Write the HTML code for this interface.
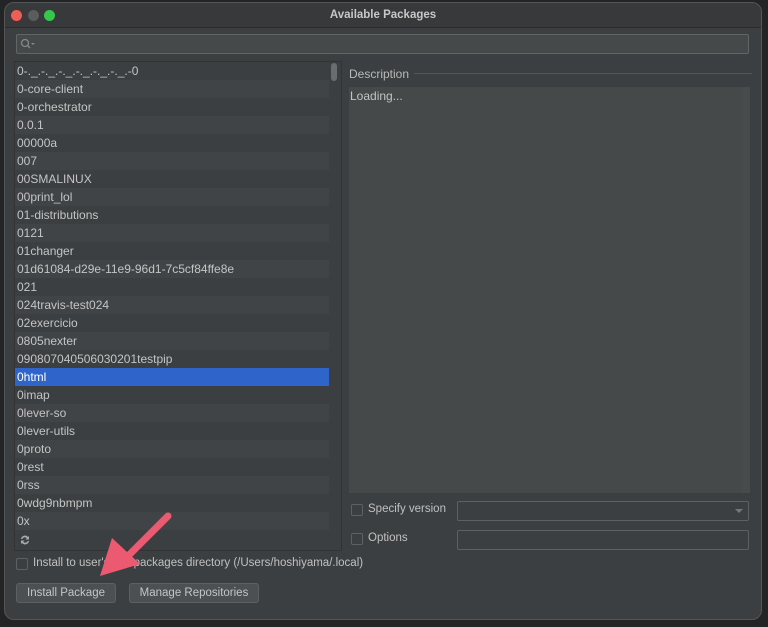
<!DOCTYPE html>
<html><head><style>
*{margin:0;padding:0;box-sizing:border-box}
body{width:768px;height:627px;background:#232425;font-family:"Liberation Sans",sans-serif;font-size:12px;color:#bbbbbb;position:relative;overflow:hidden}
.win{position:absolute;left:4px;top:2px;width:758px;height:618px;background:#3c3f41;border-radius:10px;overflow:hidden;border:1px solid #555}
.title{position:absolute;left:0;top:0;width:100%;height:25px;background:#37393b;border-bottom:1px solid #2b2b2b;text-align:center;line-height:24px;font-weight:bold;color:#c8c8c8;font-size:11.5px}
.dot{position:absolute;top:7px;width:11px;height:11px;border-radius:50%}
.abs{position:absolute}
.row{position:absolute;left:15px;width:314px;height:18px;line-height:18px;padding-left:2px;color:#c4c4c4;font-size:12px}
.cb{position:absolute;width:12px;height:12px;border:1px solid #5e6163;border-radius:2px;background:#3c3f41}
.btn{position:absolute;height:20px;background:#4c5052;border:1px solid #5e6060;border-radius:3px;text-align:center;line-height:18px;color:#c4c4c4;font-size:11.5px}
</style></head><body>
<div class="win">
<div class="title">Available Packages
<div class="dot" style="left:6px;background:#ec5f57"></div>
<div class="dot" style="left:23px;background:#5a5c5e"></div>
<div class="dot" style="left:39px;background:#34c84a"></div>
</div>
</div>
<div class="abs" style="left:16px;top:34px;width:733px;height:20px;border:1px solid #626567;background:#45494a;border-radius:2px"></div>
<svg class="abs" style="left:20px;top:38px" width="16" height="12"><circle cx="5" cy="5" r="3.5" fill="none" stroke="#888" stroke-width="1.3"/><line x1="7.5" y1="7.5" x2="10" y2="10" stroke="#888" stroke-width="1.3"/><path d="M11 5l2 2 2-2z" fill="#888"/></svg>
<div class="abs" style="left:14px;top:61px;width:328px;height:490px;border:1px solid #333;background:#3c3f41"></div>
<div id="list"></div>
<div class="abs" style="left:331px;top:63px;width:6px;height:18px;background:#6a6d70;border-radius:3px"></div>
<div class="row" style="top:530px;height:20px"><svg width="12" height="12" style="margin-top:4px;margin-left:2px" viewBox="0 0 12 12"><path d="M2 5a4 4 0 0 1 7-2l1-1v3.5H6.5l1.3-1.3A2.6 2.6 0 0 0 3.4 5z M10 7a4 4 0 0 1-7 2l-1 1V6.5h3.5L4.2 7.8A2.6 2.6 0 0 0 8.6 7z" fill="#aaa"/></svg></div>
<div class="abs" style="left:349px;top:67px;color:#b8b8b8">Description</div>
<div class="abs" style="left:414px;top:73px;width:338px;height:1px;background:#555"></div>
<div class="abs" style="left:349px;top:87px;width:401px;height:406px;background:#45494a;border-right:7px solid #474b4c"></div>
<div class="abs" style="left:350px;top:89px;color:#c4c4c4">Loading...</div>
<div class="cb" style="left:351px;top:504px"></div>
<div class="abs" style="left:368px;top:503px;color:#c0c0c0;font-size:11.5px">Specify version</div>
<div class="abs" style="left:457px;top:501px;width:292px;height:20px;border:1px solid #5e6163;border-radius:2px;background:#3c3f41"></div>
<svg class="abs" style="left:735px;top:508px" width="8" height="6"><path d="M0 1h8L4 5z" fill="#777"/></svg>
<div class="cb" style="left:351px;top:533px"></div>
<div class="abs" style="left:368px;top:532px;color:#c0c0c0;font-size:11.5px">Options</div>
<div class="abs" style="left:457px;top:530px;width:292px;height:20px;border:1px solid #5e6163;border-radius:2px;background:#3c3f41"></div>
<div class="cb" style="left:16px;top:558px"></div>
<div class="abs" style="left:33px;top:557px;color:#c0c0c0;font-size:11.5px">Install to user's site packages directory (/Users/hoshiyama/.local)</div>
<div class="btn" style="left:16px;top:583px;width:100px">Install Package</div>
<div class="btn" style="left:129px;top:583px;width:130px">Manage Repositories</div>
<svg class="abs" style="left:90px;top:510px" width="84" height="84"><line x1="78" y1="6" x2="36" y2="48" stroke="#ec5a72" stroke-width="7" stroke-linecap="round"/><path d="M10 66L22 28 50 54z" fill="#ec5a72"/></svg>
<script>
var n=["0-._.-._.-._.-._.-._.-._.-0","0-core-client","0-orchestrator","0.0.1","00000a","007","00SMALINUX","00print_lol","01-distributions","0121","01changer","01d61084-d29e-11e9-96d1-7c5cf84ffe8e","021","024travis-test024","02exercicio","0805nexter","090807040506030201testpip","0html","0imap","0lever-so","0lever-utils","0proto","0rest","0rss","0wdg9nbmpm","0x"];
var h="";n.forEach(function(t,i){var bg=i==17?"#2f65ca":(i%2?"#414446":"#3c3f41");h+='<div class="row" style="top:'+(62+i*18)+'px;background:'+bg+(i==17?';color:#fff':'')+'">'+t+'</div>'});
document.getElementById("list").innerHTML=h;
</script>
</body></html>
